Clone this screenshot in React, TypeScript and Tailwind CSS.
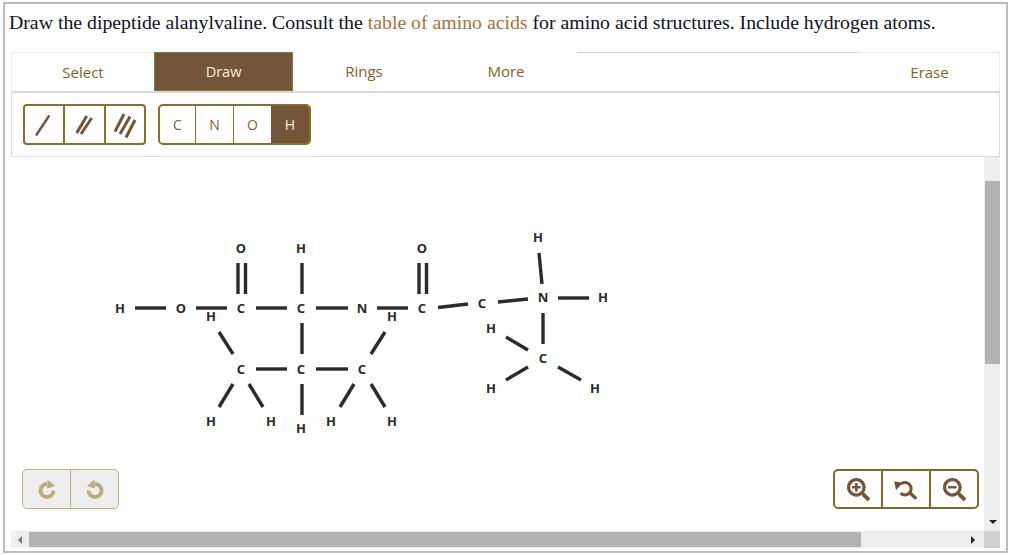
import { FaSearchPlus, FaSearchMinus } from 'react-icons/fa'

const ATOMS: [string, number, number][] = [
  ['H', 120, 308], ['O', 181, 308], ['C', 241, 308], ['C', 301, 308], ['N', 362, 308],
  ['O', 241, 248], ['H', 301, 248], ['H', 211, 316], ['H', 392, 316],
  ['C', 241, 369], ['C', 301, 369], ['C', 362, 369],
  ['H', 211, 421], ['H', 271, 421], ['H', 301, 428], ['H', 331, 421], ['H', 392, 421],
  ['C', 422, 308], ['O', 422, 248], ['C', 482, 303], ['N', 543, 297],
  ['H', 538, 237], ['H', 603, 297], ['C', 543, 358],
  ['H', 491, 328], ['H', 491, 388], ['H', 595, 388],
]

const BONDS: [number, number, number, number][] = [
  [135, 308, 166, 308], [196, 308, 227, 308], [256, 308, 287, 308], [316, 308, 348, 308], [377, 308, 408, 308],
  [238, 263, 238, 294], [245.5, 263, 245.5, 294], [302, 263, 302, 294], [302, 323, 302, 354],
  [219, 332, 233, 354], [256, 369, 287, 369], [316, 369, 348, 369],
  [219, 407, 233, 384], [249, 384, 263, 407], [302, 384, 302, 415], [340, 407, 354, 384],
  [371, 384, 385, 407], [371, 354, 385, 332],
  [419, 263, 419, 294], [426.5, 263, 426.5, 294],
  [438, 307.5, 468, 304], [498, 302, 528, 299], [539, 253, 542, 284], [558, 298, 589, 298], [543, 313, 543, 344],
  [506, 337, 528, 350], [506, 380, 528, 367], [558, 367, 581, 380],
]

const BOND_ICONS: [number, number, number, number][][] = [
  [[-8, 10.5, 5.3, -9.5]],
  [[-7.3, 8, 2.7, -9], [-3, 9, 7.7, -7]],
  [[-10, 6.5, -1, -11], [-5, 9, 5, -8.5], [1, 12.5, 10, -5]],
]

const TAB = 'flex items-center justify-center text-[15px] text-[#7d6426]'

function BondIcon({ lines }: { lines: [number, number, number, number][] }) {
  return (
    <svg width="30" height="30" viewBox="-15 -15 30 30">
      {lines.map(([x1, y1, x2, y2], i) => (
        <line key={i} x1={x1} y1={y1} x2={x2} y2={y2} stroke="#73553a" strokeWidth={lines.length === 1 ? 2.4 : 3} />
      ))}
    </svg>
  )
}

function HistoryIcon({ flip }: { flip?: boolean }) {
  return (
    <svg width="24" height="24" viewBox="0 0 24 24" fill="none" stroke="#b9ad7c">
      <g transform={flip ? 'translate(24 0) scale(-1 1)' : undefined}>
        <path d="M18.5 13.5 A6.5 6.5 0 1 1 12 7" strokeWidth="3.8" />
        <path d="M12.5 2.5 L20 9 L12 11.5 Z" fill="#b9ad7c" stroke="none" />
      </g>
    </svg>
  )
}

function ZoomResetIcon() {
  return (
    <svg width="24" height="24" viewBox="0 0 24 24" fill="none" stroke="#73553a">
      <path d="M6.6 7.3 A6.2 6.2 0 1 1 6.6 16.1" strokeWidth="3" />
      <path d="M0.3 4.3 L8.7 5.7 L2 13.3 Z" fill="#73553a" stroke="none" />
      <line x1="16" y1="16" x2="21.3" y2="20.7" strokeWidth="3.4" strokeLinecap="round" />
    </svg>
  )
}

export default function App() {
  return (
    <div className="w-[1024px] h-[555px] bg-white overflow-hidden pl-[3px] pt-[2px] font-['Open_Sans',sans-serif]">
      <div className="w-[1005px] h-[551px] border-2 border-[#bdbdbd] flex flex-col pl-[6px] pr-[6px] pb-[3px]">
        {/* Question */}
        <p className="h-[48px] pt-[5px] -ml-[2px] text-[19.8px] leading-[26px] text-[#111122] font-['Liberation_Serif',serif] whitespace-nowrap">
          Draw the dipeptide alanylvaline. Consult the <span className="text-[#a5703a]">table of amino acids</span> for amino acid structures. Include hydrogen atoms.
        </p>

        {/* Tabs */}
        <div className="h-[41px] flex border-b-2 border-[#d9d9d9]">
          <div className={`${TAB} w-[143px] border-l border-t border-[#ececec] rounded-tl-[3px]`}>Select</div>
          <div className="w-[139px] flex items-center justify-center text-[14.5px] text-[#fdf3cc] bg-[#73553a] border border-[#8b7530]">Draw</div>
          <div className={`${TAB} w-[142px]`}>Rings</div>
          <div className={`${TAB} w-[142px]`}>More</div>
          <div className="flex-1 border-t border-[#cfcfcf]" />
          <div className={`${TAB} w-[140px] border-r border-t border-[#ececec] rounded-tr-[3px]`}>Erase</div>
        </div>

        {/* Toolbar */}
        <div className="h-[64px] border border-t-0 border-[#dddddd] flex items-start pt-[11px] pl-[11px] gap-[12px]">
          <div className="h-[41px] w-[123px] flex border-2 border-[#86702a] rounded-[4px]">
            {BOND_ICONS.map((lines, i) => (
              <div key={i} className="flex-1 flex items-center justify-center border-r-2 border-[#86702a] last:border-r-0">
                <BondIcon lines={lines} />
              </div>
            ))}
          </div>
          <div className="h-[41px] w-[153px] flex border-2 border-[#86702a] rounded-[5px] overflow-hidden text-[14px] text-[#7d6426]">
            <div className="w-[36px] flex items-center justify-center border-r border-[#86702a]">C</div>
            <div className="w-[38px] flex items-center justify-center border-r border-[#86702a]">N</div>
            <div className="w-[37px] flex items-center justify-center">O</div>
            <div className="flex-1 flex items-center justify-center bg-[#73553a] text-[#fdf3cc]">H</div>
          </div>
        </div>

        {/* Canvas with scrollbars */}
        <div className="flex-1 flex flex-col">
          <div className="flex-1 flex min-h-0">
            <div className="relative flex-1">
              <svg width="973" height="374" viewBox="11 157 973 374" className="block">
                {BONDS.map(([x1, y1, x2, y2], i) => (
                  <line key={i} x1={x1} y1={y1} x2={x2} y2={y2} stroke="#2b2b2b" strokeWidth="3.4" />
                ))}
                {ATOMS.map(([label, x, y], i) => (
                  <text key={i} x={x} y={y + 4.5} textAnchor="middle" fontSize="13" fontWeight="700" fill="#2b2b2b" fontFamily="'Noto Sans', sans-serif">
                    {label}
                  </text>
                ))}
              </svg>

              <div className="absolute left-[11px] top-[312px] h-[40px] w-[97px] flex bg-[#eeeeee] border border-[#bfb27c] rounded-[5px]">
                <div className="flex-1 flex items-center justify-center border-r border-[#bfb27c]">
                  <HistoryIcon />
                </div>
                <div className="flex-1 flex items-center justify-center">
                  <HistoryIcon flip />
                </div>
              </div>

              <div className="absolute left-[822px] top-[312px] h-[40px] w-[146px] flex bg-white border-2 border-[#7f6a2c] rounded-[5px]">
                <div className="flex-1 flex items-center justify-center border-r-2 border-[#7f6a2c]">
                  <FaSearchPlus className="w-[23px] h-[23px] text-[#73553a]" />
                </div>
                <div className="flex-1 flex items-center justify-center border-r-2 border-[#7f6a2c]">
                  <ZoomResetIcon />
                </div>
                <div className="flex-1 flex items-center justify-center">
                  <FaSearchMinus className="w-[23px] h-[23px] text-[#73553a]" />
                </div>
              </div>
            </div>

            {/* Vertical scrollbar */}
            <div className="w-[16px] bg-[#eeeeee] flex flex-col pt-[24px] pl-[1px]">
              <div className="h-[183px] bg-[#b3b3b3]" />
              <div className="flex-1 flex items-end justify-center pb-[7px]">
                <div className="w-0 h-0 border-x-[4px] border-x-transparent border-t-[4px] border-t-[#222222]" />
              </div>
            </div>
          </div>

          {/* Horizontal scrollbar */}
          <div className="h-[17px] flex bg-[#eeeeee]">
            <div className="w-[18px] flex items-center justify-center">
              <div className="w-0 h-0 border-y-[4px] border-y-transparent border-r-[4px] border-r-[#777777]" />
            </div>
            <div className="w-[832px] my-px bg-[#b3b3b3]" />
            <div className="flex-1 flex items-center justify-end pr-[9px]">
              <div className="w-0 h-0 border-y-[4px] border-y-transparent border-l-[4px] border-l-[#222222]" />
            </div>
            <div className="w-[16px] bg-[#d0d0d0]" />
          </div>
        </div>
      </div>
    </div>
  )
}
